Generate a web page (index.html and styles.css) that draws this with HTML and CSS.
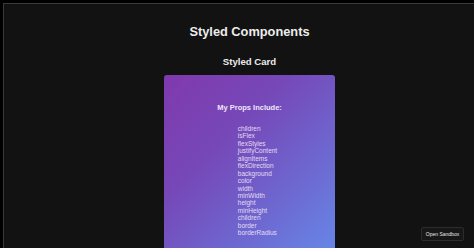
FILE: index.html
```html
<!DOCTYPE html>
<html>
<head>
<meta charset="utf-8">
<link rel="stylesheet" href="styles.css">
</head>
<body>
<div class="frame">
  <h1 class="title">Styled Components</h1>
  <h2 class="subtitle">Styled Card</h2>
  <div class="card">
    <h3 class="card-title">My Props Include:</h3>
    <ul class="props">
      <li>children</li>
      <li>isFlex</li>
      <li>flexStyles</li>
      <li>justifyContent</li>
      <li>alignItems</li>
      <li>flexDirection</li>
      <li>background</li>
      <li>color</li>
      <li>width</li>
      <li>minWidth</li>
      <li>height</li>
      <li>minHeight</li>
      <li>children</li>
      <li>border</li>
      <li>borderRadius</li>
    </ul>
  </div>
  <button class="sandbox">Open Sandbox</button>
</div>
</body>
</html>
```
FILE: styles.css
```css
html, body {
  margin: 0;
  padding: 0;
  height: 100%;
  overflow: hidden;
}
body {
  background: #000;
  padding: 3px 0 0 3px;
  box-sizing: border-box;
  font-family: "Liberation Sans", Arial, sans-serif;
}
.frame {
  position: relative;
  height: 100%;
  box-sizing: border-box;
  background: #121212;
  border-top: 1px solid #3a3a3a;
  border-left: 1px solid #3a3a3a;
  padding-left: 21px;
  color: #ececec;
  text-align: center;
  overflow: hidden;
}
.title {
  margin: 20px 0 0;
  font-size: 12.8px;
  line-height: 15px;
  font-weight: bold;
}
.subtitle {
  margin: 16.5px 0 0;
  font-size: 9.6px;
  line-height: 11px;
  font-weight: bold;
}
.card {
  width: 171px;
  height: 185px;
  margin: 8.5px auto 0;
  box-sizing: border-box;
  padding-top: 27.5px;
  border-radius: 3px;
  background: linear-gradient(135deg, #8039ad 0%, #7648b8 35%, #6d6ad2 70%, #6689e8 100%);
}
.card-title {
  margin: 0;
  font-size: 7.5px;
  line-height: 9px;
  font-weight: bold;
  color: #f0e8fa;
}
.props {
  display: inline-block;
  list-style: none;
  margin: 13.5px 0 0;
  padding: 0 0 0 16px;
  text-align: left;
  font-size: 6.5px;
  line-height: 7.43px;
  color: #e4dcf2;
}
.sandbox {
  position: absolute;
  right: 10px;
  bottom: 7px;
  width: 43px;
  height: 14px;
  padding: 0;
  background: #171717;
  border: 1px solid #2c2c2c;
  border-radius: 2px;
  color: #e8e8e8;
  font-family: "Liberation Sans", Arial, sans-serif;
  font-size: 5px;
  line-height: 12px;
}
```
